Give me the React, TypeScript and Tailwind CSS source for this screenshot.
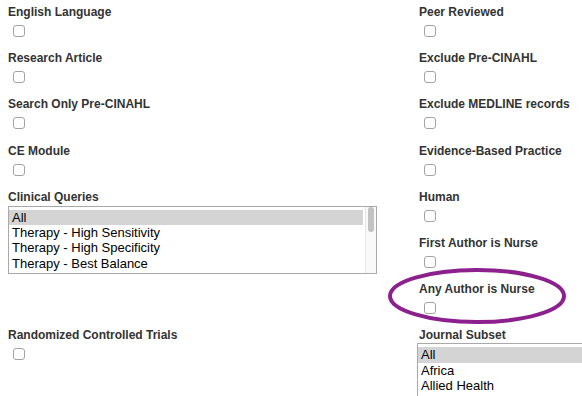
import React from "react";

const font = { fontFamily: '"Liberation Sans", Arial, Helvetica, sans-serif' };

function Check({ label }: { label: string }) {
  return (
    <div className="h-[46.2px]">
      <div className="text-[12px] leading-[14px] font-bold text-[#333333]">{label}</div>
      <div className="mt-[6px] ml-[5px] w-[12px] h-[12px] border border-[#a3a3a3] rounded-[3px] bg-white" />
    </div>
  );
}

function ListBox({ items, scrollbar }: { items: string[]; scrollbar?: boolean }) {
  return (
    <div className="flex w-[369px] h-[68px] border border-[#a9a9a9] bg-white overflow-hidden">
      <div className="flex-1 pt-[3px] pr-[2px] overflow-hidden">
        {items.map((it, i) => (
          <div
            key={it}
            className={`h-[15.3px] leading-[15px] text-[13px] pl-[3px] text-black whitespace-nowrap ${i === 0 ? "bg-[#d4d4d4]" : ""}`}
          >
            {it}
          </div>
        ))}
      </div>
      {scrollbar && (
        <div className="w-[11px] border-l border-[#e6e6e6] bg-[#f9f9f9] pl-[2px]">
          <div className="w-[6px] h-[25px] rounded-full bg-[#c2c2c2]" />
        </div>
      )}
    </div>
  );
}

export default function App() {
  return (
    <div className="relative w-[582px] h-[396px] overflow-hidden bg-white" style={font}>
      <div className="flex pl-[8px] pt-[5px]">
        <div className="w-[369px] shrink-0">
          <Check label="English Language" />
          <Check label="Research Article" />
          <Check label="Search Only Pre-CINAHL" />
          <Check label="CE Module" />
          <div className="h-[138.6px]">
            <div className="text-[12px] leading-[14px] font-bold text-[#333333] mb-[2px]">Clinical Queries</div>
            <ListBox
              scrollbar
              items={[
                "All",
                "Therapy - High Sensitivity",
                "Therapy - High Specificity",
                "Therapy - Best Balance",
                "Prognosis - High Sensitivity",
              ]}
            />
          </div>
          <Check label="Randomized Controlled Trials" />
        </div>
        <div className="ml-[40px] w-[369px] shrink-0">
          <div className="pl-[2px]">
            <Check label="Peer Reviewed" />
            <Check label="Exclude Pre-CINAHL" />
            <Check label="Exclude MEDLINE records" />
            <Check label="Evidence-Based Practice" />
            <Check label="Human" />
            <Check label="First Author is Nurse" />
            <Check label="Any Author is Nurse" />
            <div className="text-[12px] leading-[14px] font-bold text-[#333333] mb-[1px]">Journal Subset</div>
          </div>
          <ListBox
            items={["All", "Africa", "Allied Health", "Alternative/Complementary Therapies", "Asia"]}
          />
        </div>
      </div>
      <svg
        className="absolute left-[380px] top-[262px] pointer-events-none"
        width="202"
        height="70"
        viewBox="0 0 202 70"
      >
        <ellipse cx="97" cy="34" rx="87" ry="26" fill="none" stroke="#8c218e" strokeWidth="4" />
      </svg>
    </div>
  );
}
